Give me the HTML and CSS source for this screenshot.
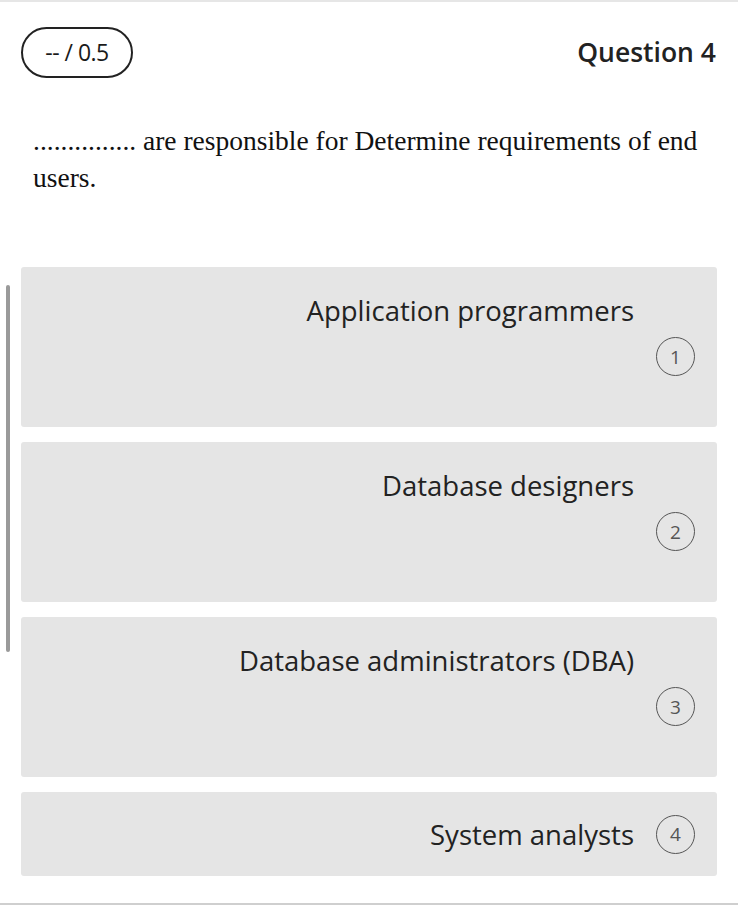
FILE: index.html
```html
<!DOCTYPE html>
<html>
<head>
<meta charset="utf-8">
<link rel="stylesheet" href="styles.css">
</head>
<body>
<div class="page">
  <div class="scrollbar"></div>
  <header class="head">
    <div class="score">-- / 0.5</div>
    <div class="qnum">Question 4</div>
  </header>
  <p class="question">............... are responsible for Determine requirements of end users.</p>
  <div class="options">
    <div class="option">
      <div class="label">Application programmers</div>
      <div class="num">1</div>
    </div>
    <div class="option">
      <div class="label">Database designers</div>
      <div class="num">2</div>
    </div>
    <div class="option">
      <div class="label">Database administrators (DBA)</div>
      <div class="num">3</div>
    </div>
    <div class="option short">
      <div class="label">System analysts</div>
      <div class="num">4</div>
    </div>
  </div>
  <div class="bottom-line"></div>
</div>
</body>
</html>
```

FILE: styles.css
```css
* { box-sizing: border-box; }
html, body { margin: 0; padding: 0; background: #fff; }
body { font-family: "Open Sans", "Noto Sans", sans-serif; color: #222; }

.page {
  position: relative;
  width: 738px;
  height: 907px;
  border-top: 2px solid #e6e6e6;
  overflow: hidden;
}

.scrollbar {
  position: absolute;
  left: 6px;
  top: 283px;
  width: 4px;
  height: 367px;
  border-radius: 2px;
  background: #9a9a9a;
}

.head {
  display: flex;
  align-items: center;
  justify-content: space-between;
  margin-top: 25px;
  padding: 0 22px 0 21px;
}

.score {
  height: 51px;
  width: 112px;
  border: 2px solid #222;
  border-radius: 26px;
  display: flex;
  align-items: center;
  justify-content: center;
  font-size: 23px;
  letter-spacing: -0.5px;
  color: #1a1a1a;
  padding-bottom: 2px;
}

.qnum {
  font-size: 26.5px;
  font-weight: 600;
  color: #222;
  margin-top: -2px;
}

.question {
  font-family: "Liberation Serif", "Times New Roman", serif;
  font-size: 27.5px;
  line-height: 37px;
  color: #111;
  margin: 44px 30px 0 33px;
}

.options {
  display: flex;
  flex-direction: column;
  gap: 15px;
  margin: 71px 21px 0 21px;
}

.option {
  display: grid;
  grid-template-columns: 1fr auto;
  column-gap: 22px;
  align-items: start;
  height: 160px;
  padding: 25px 22px 0 20px;
  background: #e5e5e5;
  border-radius: 3px;
}

.option .label {
  text-align: right;
  font-size: 27.5px;
  color: #222;
  line-height: 37px;
}

.option .num {
  width: 39px;
  height: 39px;
  margin-top: 45px;
  border: 1.5px solid #555;
  border-radius: 50%;
  display: flex;
  align-items: center;
  justify-content: center;
  font-size: 19px;
  color: #555;
}

.option.short {
  height: 84px;
  align-items: center;
  padding-top: 0;
}

.option.short .num { margin-top: 0; }

.bottom-line {
  position: absolute;
  left: 0;
  right: 0;
  top: 901px;
  height: 2px;
  background: #cfcfcf;
}
```
